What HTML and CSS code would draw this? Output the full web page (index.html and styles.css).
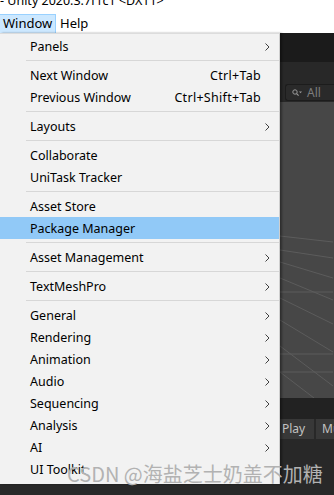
FILE: index.html
```html
<!DOCTYPE html>
<html lang="zh-CN">
<head>
    <meta charset="UTF-8">
    <meta name="viewport" content="width=device-width, initial-scale=1.0">
    <title>Window 菜单</title>
    <link rel="stylesheet" href="styles.css">
</head>
<body>
    <div class="titlebar"><span>- Unity 2020.3.7f1c1 &lt;DX11&gt;</span></div>

    <div class="menubar">
        <div class="menubar-item open">Window</div>
        <div class="menubar-item">Help</div>
    </div>

    <div class="workspace">
        <div class="menu">
            <div class="item sub">Panels</div>
            <div class="sep"></div>
            <div class="item">Next Window<span class="key">Ctrl+Tab</span></div>
            <div class="item">Previous Window<span class="key">Ctrl+Shift+Tab</span></div>
            <div class="sep"></div>
            <div class="item sub">Layouts</div>
            <div class="sep"></div>
            <div class="item">Collaborate</div>
            <div class="item">UniTask Tracker</div>
            <div class="sep"></div>
            <div class="item">Asset Store</div>
            <div class="item hover">Package Manager</div>
            <div class="sep"></div>
            <div class="item sub">Asset Management</div>
            <div class="sep"></div>
            <div class="item sub">TextMeshPro</div>
            <div class="sep"></div>
            <div class="item sub">General</div>
            <div class="item sub">Rendering</div>
            <div class="item sub">Animation</div>
            <div class="item sub">Audio</div>
            <div class="item sub">Sequencing</div>
            <div class="item sub">Analysis</div>
            <div class="item sub">AI</div>
            <div class="item">UI Toolkit</div>
        </div>

        <div class="editor">
            <div class="toolbar"></div>
            <div class="searchbar">
                <div class="search">
                    <svg width="10" height="8" viewBox="0 0 10 8">
                        <circle cx="3" cy="3" r="2.2" fill="none" stroke="#9a9a9a" stroke-width="1"/>
                        <path d="M4.6 4.6 L6.6 6.6" stroke="#9a9a9a" stroke-width="1.2"/>
                        <path d="M7 2.5 L10 2.5 L8.5 4.2 Z" fill="#9a9a9a"/>
                    </svg>
                    <span>All</span>
                </div>
            </div>
            <div class="scene">
                <svg width="53" height="296" viewBox="0 0 53 296">
                    <g stroke="#5c5c5c" stroke-width="1" fill="none">
                        <path d="M0 134 L53 140"/>
                        <path d="M0 148 L53 156"/>
                        <path d="M0 160 L53 176"/>
                        <path d="M0 176 L53 198"/>
                        <path d="M0 196 L53 222"/>
                        <path d="M0 218 L53 250"/>
                        <path d="M0 244 L53 284"/>
                        <path d="M0 270 L34 296"/>
                        <path d="M0 190 L53 190"/>
                        <path d="M0 252 L53 252"/>
                        <path d="M0 270 L53 270"/>
                    </g>
                </svg>
            </div>
            <div class="strip"></div>
            <div class="tabs">
                <div class="tab play">Play</div>
                <div class="tab">Mu</div>
            </div>
        </div>
    </div>

    <div class="watermark">CSDN @海盐芝士奶盖不加糖</div>
</body>
</html>
```

FILE: styles.css
```css
body {
    margin: 0;
    width: 334px;
    height: 495px;
    overflow: hidden;
    position: relative;
    background: #282828;
    font-family: "Noto Sans", "Noto Sans CJK SC", sans-serif;
    font-size: 12.5px;
    color: #000;
}

.titlebar {
    height: 12px;
    overflow: hidden;
    background: #fff;
    font-size: 12.5px;
}

.titlebar span {
    display: block;
    margin-top: -7px;
    line-height: 16px;
}

.menubar {
    display: flex;
    height: 21px;
    background: #fff;
    font-size: 13px;
}

.menubar-item {
    height: 18px;
    margin-top: 2px;
    padding: 0 7px 0 3px;
    line-height: 17px;
    border: 1px solid transparent;
}

.menubar-item.open {
    background: #cce8ff;
    border-color: #99d1ff;
    border-left: none;
    width: 45px;
}

.workspace {
    display: flex;
    align-items: flex-start;
}

.menu {
    width: 280px;
    flex: 0 0 auto;
    padding: 1px 0 4px;
    background: #f2f2f2;
    border-top: 1px solid #dcdcdc;
    border-right: 1px solid #cfcfcf;
    box-shadow: 2px 0 2px rgba(0, 0, 0, 0.35);
    box-sizing: border-box;
    position: relative;
    z-index: 1;
}

.item {
    display: flex;
    align-items: center;
    height: 22px;
    padding: 0 18px 0 30px;
    white-space: nowrap;
}

.item.hover {
    background: #91c9f7;
}

.item.sub {
    background-image: url("data:image/svg+xml,%3Csvg xmlns='http://www.w3.org/2000/svg' width='5' height='8'%3E%3Cpath d='M0.5 0.5 L4 4 L0.5 7.5' fill='none' stroke='%23404040' stroke-width='1'/%3E%3C/svg%3E");
    background-repeat: no-repeat;
    background-position: 265px 8px;
}

.key {
    margin-left: auto;
    letter-spacing: 0.3px;
}

.sep {
    height: 1px;
    margin: 3px 0 3px 26px;
    background: #d7d7d7;
}

.editor {
    flex: 1;
    display: flex;
    flex-direction: column;
    height: 462px;
}

.toolbar {
    height: 29px;
    background: #1b1b1b;
}

.searchbar {
    height: 40px;
    background: #282828;
    box-sizing: border-box;
    padding: 22px 0 0 5px;
}

.search {
    display: flex;
    align-items: center;
    gap: 5px;
    height: 15px;
    padding-left: 6px;
    background: #2a2a2a;
    border: 1px solid #1c1c1c;
    border-right: none;
    border-radius: 3px 0 0 3px;
    color: #7d7d7d;
    font-size: 12px;
}

.scene {
    height: 296px;
    background: #474747;
    overflow: hidden;
}

.scene svg {
    display: block;
}

.strip {
    height: 21px;
    background: #222;
}

.tabs {
    display: flex;
    gap: 2px;
    height: 20px;
    margin-left: -4px;
}

.tab {
    padding: 0 4px 0 6px;
    line-height: 20px;
    background: #383838;
    color: #c2c2c2;
    font-size: 12px;
}

.tab.play {
    width: 28px;
}

.watermark {
    position: absolute;
    left: 67px;
    top: 461px;
    font-family: "Noto Sans CJK SC", sans-serif;
    font-size: 20px;
    line-height: 26px;
    color: #b2b2b2;
    white-space: nowrap;
    z-index: 2;
}
```
